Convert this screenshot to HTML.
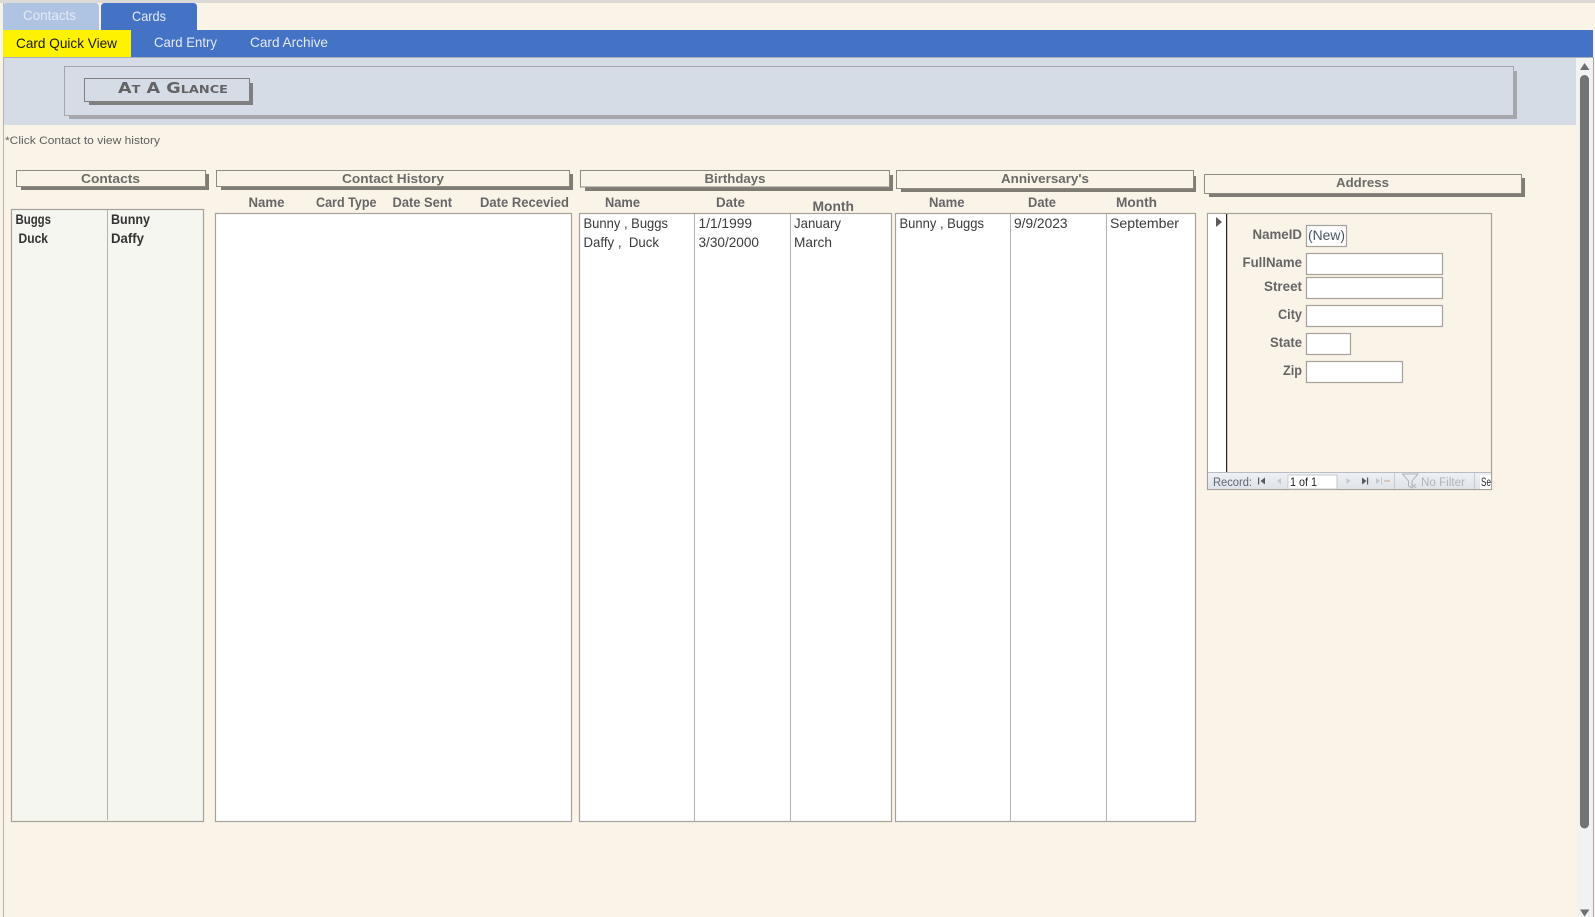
<!DOCTYPE html>
<html><head><meta charset="utf-8"><title>At A Glance</title>
<style>
html,body{margin:0;padding:0;width:1595px;height:917px;overflow:hidden;background:#f9f3e8}
svg{display:block}
text{font-family:"Liberation Sans",sans-serif;font-size:13.5px}
.b{font-weight:bold;fill:#666}
.h{font-weight:bold;fill:#6b6b68;font-size:13px}
.d{fill:#3a3a3a;font-size:14px}
.k{font-weight:bold;fill:#333;font-size:14px}
.n{fill:#e4eaf6;font-size:14px}
.r{fill:#5f6670;font-size:11.5px}
.g{fill:#b0b4ba;font-size:11.5px}
.box{fill:#fff;stroke:#a6a299;stroke-width:1.2}
</style></head><body>
<svg width="1595" height="917" viewBox="0 0 1595 917" xmlns="http://www.w3.org/2000/svg">
<defs><linearGradient id="nb" x1="0" y1="0" x2="0" y2="1"><stop offset="0" stop-color="#eef1f5"/><stop offset="1" stop-color="#dfe4ea"/></linearGradient></defs>
<rect width="1595" height="917" fill="#f9f3e8"/>
<rect width="1595" height="3" fill="#dcdad7"/>
<rect x="3" y="3" width="1" height="914" fill="#b5b3ae"/>

<!-- tabs -->
<path d="M3 30V7q0-4 4-4H95q4 0 4 4V30Z" fill="#afc3e3"/>
<path d="M101 30V7q0-4 4-4H193q4 0 4 4V30Z" fill="#4472c4"/>
<text class="n" x="23" y="20" textLength="53" lengthAdjust="spacingAndGlyphs">Contacts</text>
<text class="n" x="132" y="21" textLength="34" lengthAdjust="spacingAndGlyphs">Cards</text>

<rect x="3" y="30" width="1590" height="27" fill="#4472c4"/>
<rect x="3" y="30" width="128" height="27" fill="#fff200"/>
<text x="16" y="48" textLength="101" lengthAdjust="spacingAndGlyphs" fill="#1a1a1a" style="font-size:14px">Card Quick View</text>
<text class="n" x="154" y="47" textLength="63" lengthAdjust="spacingAndGlyphs">Card Entry</text>
<text class="n" x="250" y="47" textLength="78" lengthAdjust="spacingAndGlyphs">Card Archive</text>

<!-- header band -->
<rect x="4" y="57" width="1572" height="68" fill="#d6dce5"/>
<rect x="4" y="57" width="1589" height="1" fill="#a9b0bd"/>
<rect x="69" y="71" width="1448" height="48" fill="#a5a7ab"/>
<rect x="64.5" y="66.5" width="1449" height="49" fill="#d6dce5" stroke="#a5a7ab"/>
<rect x="89" y="83" width="164" height="22" fill="#7f7f7f"/>
<rect x="84.5" y="78.5" width="165" height="23" fill="#d6dce5" stroke="#7f7f7f"/>
<text x="118" y="93" textLength="110" lengthAdjust="spacingAndGlyphs" style="font-family:'DejaVu Sans',sans-serif;font-weight:bold;font-size:15px;font-variant:small-caps" fill="#636363">At A Glance</text>

<text x="5" y="144" textLength="155" lengthAdjust="spacingAndGlyphs" style="font-size:11px" fill="#5f5f5f">*Click Contact to view history</text>

<!-- section headers -->
<g fill="#7f7c76">
<rect x="21" y="174" width="188" height="16"/>
<rect x="221" y="174" width="352" height="16"/>
<rect x="585" y="175" width="308" height="16"/>
<rect x="901" y="176" width="295" height="16"/>
<rect x="1209" y="178" width="316" height="19"/>
</g>
<g fill="#f9f3e8" stroke="#8d8a84">
<rect x="16.5" y="170.5" width="189" height="16"/>
<rect x="216.5" y="170.5" width="353" height="16"/>
<rect x="580.5" y="170.5" width="309" height="16.5"/>
<rect x="896.5" y="170.5" width="297" height="18"/>
<rect x="1204.5" y="174.5" width="317" height="19"/>
</g>
<text class="h" x="81" y="183" textLength="59" lengthAdjust="spacingAndGlyphs">Contacts</text>
<text class="h" x="342" y="183" textLength="102" lengthAdjust="spacingAndGlyphs">Contact History</text>
<text class="h" x="704.5" y="183" textLength="61" lengthAdjust="spacingAndGlyphs">Birthdays</text>
<text class="h" x="1001" y="183" textLength="88" lengthAdjust="spacingAndGlyphs">Anniversary's</text>
<text class="h" x="1336" y="187" textLength="53" lengthAdjust="spacingAndGlyphs">Address</text>

<!-- column labels -->
<text class="b" x="248.5" y="207" textLength="36" lengthAdjust="spacingAndGlyphs">Name</text>
<text class="b" x="316" y="207" textLength="60.5" lengthAdjust="spacingAndGlyphs">Card Type</text>
<text class="b" x="392.5" y="207" textLength="59.5" lengthAdjust="spacingAndGlyphs">Date Sent</text>
<text class="b" x="480" y="207" textLength="89" lengthAdjust="spacingAndGlyphs">Date Recevied</text>
<text class="b" x="605" y="207" textLength="35" lengthAdjust="spacingAndGlyphs">Name</text>
<text class="b" x="716" y="207" textLength="29" lengthAdjust="spacingAndGlyphs">Date</text>
<text class="b" x="812.5" y="211" textLength="41.5" lengthAdjust="spacingAndGlyphs">Month</text>
<text class="b" x="929" y="207" textLength="35.5" lengthAdjust="spacingAndGlyphs">Name</text>
<text class="b" x="1028" y="207" textLength="28" lengthAdjust="spacingAndGlyphs">Date</text>
<text class="b" x="1116" y="207" textLength="41" lengthAdjust="spacingAndGlyphs">Month</text>

<!-- lists -->
<rect x="11.5" y="209.5" width="192" height="612" fill="#f6f6f0" stroke="#a6a299" stroke-width="1.2"/>
<rect x="107" y="210" width="1" height="610" fill="#b5b2a9"/>
<rect class="box" x="215.5" y="213.5" width="356" height="608"/>
<rect class="box" x="579.5" y="213.5" width="312" height="608"/>
<rect x="694" y="214" width="1" height="607" fill="#b5b2a9"/>
<rect x="790" y="214" width="1" height="607" fill="#b5b2a9"/>
<rect class="box" x="895.5" y="213.5" width="300" height="608"/>
<rect x="1010" y="214" width="1" height="607" fill="#b5b2a9"/>
<rect x="1106" y="214" width="1" height="607" fill="#b5b2a9"/>

<text class="k" x="15.5" y="224" textLength="35.5" lengthAdjust="spacingAndGlyphs">Buggs</text>
<text class="k" x="111" y="224" textLength="39" lengthAdjust="spacingAndGlyphs">Bunny</text>
<text class="k" x="18.5" y="243" textLength="29.5" lengthAdjust="spacingAndGlyphs">Duck</text>
<text class="k" x="111" y="243" textLength="33" lengthAdjust="spacingAndGlyphs">Daffy</text>

<text class="d" x="583.5" y="228" textLength="84.5" lengthAdjust="spacingAndGlyphs">Bunny , Buggs</text>
<text class="d" x="698.5" y="228" textLength="53.5" lengthAdjust="spacingAndGlyphs">1/1/1999</text>
<text class="d" x="794" y="228" textLength="47" lengthAdjust="spacingAndGlyphs">January</text>
<text class="d" x="583.5" y="247" textLength="75.5" lengthAdjust="spacingAndGlyphs" xml:space="preserve">Daffy ,  Duck</text>
<text class="d" x="698.5" y="247" textLength="60.5" lengthAdjust="spacingAndGlyphs">3/30/2000</text>
<text class="d" x="794" y="247" textLength="38" lengthAdjust="spacingAndGlyphs">March</text>
<text class="d" x="899.5" y="228" textLength="84.5" lengthAdjust="spacingAndGlyphs">Bunny , Buggs</text>
<text class="d" x="1014" y="228" textLength="53.5" lengthAdjust="spacingAndGlyphs">9/9/2023</text>
<text class="d" x="1110" y="228" textLength="69" lengthAdjust="spacingAndGlyphs">September</text>

<!-- address form -->
<rect x="1207.5" y="213.5" width="284" height="276" fill="#f9f3e8" stroke="#a6a299" stroke-width="1.2"/>
<rect x="1208" y="214" width="18" height="258" fill="#fff"/>
<rect x="1226" y="214" width="1.2" height="258" fill="#222"/>
<path d="M1216 217L1222 222L1216 227Z" fill="#5a5a5a"/>

<text class="b" x="1252.5" y="239" textLength="49.5" lengthAdjust="spacingAndGlyphs">NameID</text>
<text class="b" x="1242.5" y="267" textLength="59.5" lengthAdjust="spacingAndGlyphs">FullName</text>
<text class="b" x="1264" y="291" textLength="38" lengthAdjust="spacingAndGlyphs">Street</text>
<text class="b" x="1278" y="319" textLength="24" lengthAdjust="spacingAndGlyphs">City</text>
<text class="b" x="1270" y="347" textLength="32" lengthAdjust="spacingAndGlyphs">State</text>
<text class="b" x="1283" y="375" textLength="19" lengthAdjust="spacingAndGlyphs">Zip</text>

<rect class="box" x="1306.5" y="225.5" width="40" height="21"/>
<rect class="box" x="1306.5" y="253.5" width="136" height="21"/>
<rect class="box" x="1306.5" y="277.5" width="136" height="21"/>
<rect class="box" x="1306.5" y="305.5" width="136" height="21"/>
<rect class="box" x="1306.5" y="333.5" width="44" height="21"/>
<rect class="box" x="1306.5" y="361.5" width="96" height="21"/>
<text x="1308" y="240" textLength="37" lengthAdjust="spacingAndGlyphs" fill="#44546a" style="font-size:14px">(New)</text>

<!-- record nav -->
<rect x="1208" y="472.5" width="283" height="16.5" fill="url(#nb)"/>
<rect x="1208" y="472" width="283" height="1" fill="#b9bdc3"/>
<text class="r" x="1213" y="486" textLength="39" lengthAdjust="spacingAndGlyphs">Record:</text>
<path d="M1258 477.5h1.2v7H1258ZM1265 477.5v7l-4.5-3.5Z" fill="#555a62"/>
<path d="M1281 478v6l-4-3Z" fill="#c3c7cc"/>
<rect x="1288" y="475" width="49" height="14" fill="#fff" stroke="#b8bcc2" stroke-width=".8"/>
<text x="1290" y="486" textLength="27" lengthAdjust="spacingAndGlyphs" style="font-size:12px" fill="#222">1 of 1</text>
<path d="M1346.5 478v6l4-3Z" fill="#c3c7cc"/>
<path d="M1362 477.5v7l4.5-3.5ZM1367 477.5h1.2v7H1367Z" fill="#555a62"/>
<path d="M1376 478v6l4-3ZM1381 477.5h1v7h-1Z" fill="#c3c7cc"/>
<rect x="1384" y="480" width="6" height="2" fill="#d8c6c0"/>
<rect x="1394" y="473" width="1" height="16" fill="#c8ccd2"/>
<path d="M1402.5 474H1418L1412 481V488L1408.5 486V481Z" fill="none" stroke="#b0b4ba"/>
<path d="M1412 484l4 4m0-4l-4 4" stroke="#b8bcc2" fill="none"/>
<text class="g" x="1421" y="486" textLength="44" lengthAdjust="spacingAndGlyphs">No Filter</text>
<rect x="1474" y="473" width="1" height="16" fill="#c8ccd2"/>
<rect x="1480" y="475" width="11" height="14" fill="#fff"/>
<text x="1481" y="486" style="font-size:12px" fill="#222" textLength="10" lengthAdjust="spacingAndGlyphs">Se</text>
<rect x="1491" y="213" width="1" height="277" fill="#a6a299"/>

<!-- scrollbar -->
<rect x="1577" y="58" width="16" height="859" fill="#f2f2f2"/>
<rect x="1593" y="57" width="1" height="860" fill="#a8a8a8"/>
<path d="M1584.5 63L1589.5 70H1580Z" fill="#6e6e6e"/>
<path d="M1584.5 916.5L1589.5 909.5H1580Z" fill="#6e6e6e"/>
<rect x="1580" y="75" width="9" height="753.5" rx="4.5" fill="#737373"/>
</svg>
</body></html>
